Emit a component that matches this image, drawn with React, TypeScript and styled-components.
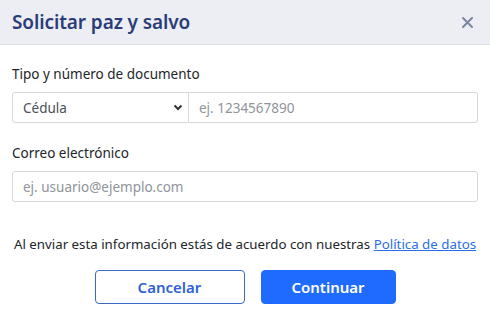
import React from "react";
import styled, { createGlobalStyle } from "styled-components";

const GlobalStyle = createGlobalStyle`
  * { box-sizing: border-box; }
  html, body { margin: 0; padding: 0; background: #ffffff; }
  body { font-family: "Noto Sans", "Open Sans", Arial, sans-serif; color: #212529; }
`;

const Modal = styled.div`
  width: 490px;
  min-height: 322px;
  display: flex;
  flex-direction: column;
  background: #ffffff;
`;

const Header = styled.header`
  flex-shrink: 0;
  height: 45px;
  display: flex;
  align-items: center;
  justify-content: space-between;
  padding: 0 12px;
  background: #eceef4;
  border-bottom: 1px solid #dcdfe6;
`;

const Title = styled.h1`
  margin: 0;
  font-size: 19px;
  font-weight: 600;
  color: #2a3d78;
  letter-spacing: -0.1px;
`;

const CloseButton = styled.button`
  border: none;
  background: none;
  padding: 0;
  width: 16px;
  height: 16px;
  display: flex;
  align-items: center;
  justify-content: center;
  cursor: pointer;
  margin-right: 3px;
`;

const Body = styled.div`
  padding: 19px 12px 0;
  display: flex;
  flex-direction: column;
`;

const Label = styled.label`
  font-size: 13.5px;
  color: #212529;
  line-height: 20px;
  margin-bottom: 8px;
`;

const Group = styled.div`
  display: flex;
  flex-direction: column;
  margin-bottom: 20px;
`;

const InputRow = styled.div`
  display: flex;
  width: 466px;
`;

const SelectWrap = styled.div`
  position: relative;
  width: 177px;
`;

const Select = styled.select`
  appearance: none;
  width: 100%;
  height: 31px;
  border: 1px solid #d6d8dc;
  border-radius: 3px 0 0 3px;
  padding: 0 24px 0 10px;
  font-family: inherit;
  font-size: 13.5px;
  color: #495057;
  background: #ffffff;
  outline: none;
`;

const Chevron = styled.svg`
  position: absolute;
  right: 6px;
  top: 12px;
  pointer-events: none;
`;

const TextInput = styled.input<{ $joined?: boolean }>`
  flex: 1;
  width: 100%;
  height: 31px;
  border: 1px solid #d6d8dc;
  border-left-width: ${({ $joined }) => ($joined ? 0 : 1)}px;
  border-radius: ${({ $joined }) => ($joined ? "0 3px 3px 0" : "3px")};
  padding: 0 10px;
  font-family: inherit;
  font-size: 13.5px;
  color: #495057;
  outline: none;
  &::placeholder { color: #8f949a; }
`;

const Notice = styled.p`
  margin: 12px 0 0;
  text-align: center;
  font-size: 13.3px;
  color: #212529;
  line-height: 20px;
  white-space: nowrap;
`;

const Link = styled.a`
  color: #2a6ee8;
  text-decoration: underline;
`;

const Actions = styled.div`
  display: flex;
  justify-content: center;
  gap: 16px;
  margin-top: 16px;
`;

const Button = styled.button<{ $primary?: boolean }>`
  height: 34px;
  width: ${({ $primary }) => ($primary ? 135 : 150)}px;
  border-radius: 4px;
  font-family: inherit;
  font-size: 15px;
  font-weight: 600;
  cursor: pointer;
  border: 1px solid ${({ $primary }) => ($primary ? "#1f6bff" : "#3a68c4")};
  background: ${({ $primary }) => ($primary ? "#1f6bff" : "#ffffff")};
  color: ${({ $primary }) => ($primary ? "#ffffff" : "#2f62d0")};
`;

export default function App() {
  return (
    <>
      <GlobalStyle />
      <Modal>
        <Header>
          <Title>Solicitar paz y salvo</Title>
          <CloseButton aria-label="Cerrar">
            <svg width="11" height="11" viewBox="0 0 11 11">
              <path d="M1 1 L10 10 M10 1 L1 10" stroke="#7d86a0" strokeWidth="2" strokeLinecap="round" />
            </svg>
          </CloseButton>
        </Header>
        <Body>
          <Group>
            <Label>Tipo y número de documento</Label>
            <InputRow>
              <SelectWrap>
                <Select defaultValue="cedula">
                  <option value="cedula">Cédula</option>
                </Select>
                <Chevron width="10" height="7" viewBox="0 0 10 7">
                  <path d="M1.5 1.5 L5 5 L8.5 1.5" stroke="#333" strokeWidth="2" fill="none" />
                </Chevron>
              </SelectWrap>
              <TextInput $joined placeholder="ej. 1234567890" />
            </InputRow>
          </Group>
          <Group>
            <Label>Correo electrónico</Label>
            <InputRow>
              <TextInput placeholder="ej. usuario@ejemplo.com" />
            </InputRow>
          </Group>
          <Notice>
            Al enviar esta información estás de acuerdo con nuestras <Link href="#">Política de datos</Link>
          </Notice>
          <Actions>
            <Button>Cancelar</Button>
            <Button $primary>Continuar</Button>
          </Actions>
        </Body>
      </Modal>
    </>
  );
}
